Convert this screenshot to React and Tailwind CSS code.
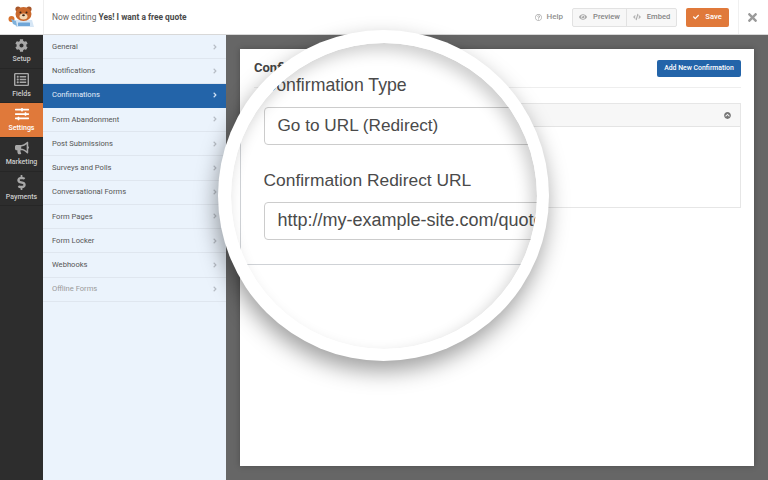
import {
  FaCog,
  FaRegListAlt,
  FaSlidersH,
  FaBullhorn,
  FaDollarSign,
  FaAngleRight,
  FaTimes,
  FaCheck,
  FaEye,
  FaCode,
  FaRegQuestionCircle,
  FaChevronCircleUp,
} from "react-icons/fa";

const panels = [
  { label: "General" },
  { label: "Notifications" },
  { label: "Confirmations", active: true },
  { label: "Form Abandonment" },
  { label: "Post Submissions" },
  { label: "Surveys and Polls" },
  { label: "Conversational Forms" },
  { label: "Form Pages" },
  { label: "Form Locker" },
  { label: "Webhooks" },
  { label: "Offline Forms", muted: true },
];

const tabs = [
  { label: "Setup", icon: <FaCog className="text-[13px]" /> },
  { label: "Fields", icon: <FaRegListAlt className="text-[15px]" /> },
  { label: "Settings", icon: <FaSlidersH className="text-[14px]" />, active: true },
  { label: "Marketing", icon: <FaBullhorn className="text-[14px]" /> },
  { label: "Payments", icon: <FaDollarSign className="text-[15px]" /> },
];

const BearLogo = () => (
  <svg width="28" height="22" viewBox="0 0 28 22">
    <circle cx="3.5" cy="13" r="3" fill="#d9722c" />
    <circle cx="10" cy="3" r="2.6" fill="#a6562a" />
    <circle cx="21" cy="3" r="2.6" fill="#a6562a" />
    <path d="M7 14 h17 l2 7 h-18 z" fill="#d6e6f5" />
    <ellipse cx="15.5" cy="8" rx="8" ry="7" fill="#c9682c" />
    <ellipse cx="15.5" cy="10.5" rx="4" ry="3" fill="#f3d6b4" />
    <circle cx="12.5" cy="6.5" r="1" fill="#3a2418" />
    <circle cx="18.5" cy="6.5" r="1" fill="#3a2418" />
    <ellipse cx="15.5" cy="9.3" rx="1.4" ry="1" fill="#3a2418" />
    <rect x="10" y="16.5" width="12" height="3.5" rx="0.5" fill="#6ea6d8" />
    <path d="M3 13 l5 2 l1 5 l-4 -2 z" fill="#7fb2dc" />
  </svg>
);

export default function App() {
  return (
    <div className="relative w-[768px] h-[480px] overflow-hidden bg-white font-['Roboto','Liberation_Sans',sans-serif]">
      {/* top bar */}
      <div className="flex h-[35px] items-center border-b border-[#d8d8d8] bg-white">
        <div className="flex h-full w-[44px] items-center justify-center border-r border-[#eeeeee]">
          <BearLogo />
        </div>
        <p className="ml-[8px] text-[8.4px] text-[#666666]">
          Now editing <span className="font-bold text-[#4a4a4a]">Yes! I want a free quote</span>
        </p>
        <div className="ml-auto flex h-full items-center">
          <div className="flex items-center gap-[5px] text-[8px] font-medium text-[#8f8f8f]">
            <FaRegQuestionCircle className="text-[7px] text-[#aaaaaa]" />
            Help
          </div>
          <div className="ml-[9px] flex h-[19px] w-[105px] rounded-[2px] border border-[#e2e2e2] bg-[#f7f7f7] text-[7.6px] font-medium text-[#858585]">
            <div className="flex w-[54px] items-center justify-center gap-[6px] border-r border-[#e2e2e2]">
              <FaEye className="text-[8px] text-[#aaaaaa]" />
              Preview
            </div>
            <div className="flex flex-1 items-center justify-center gap-[6px]">
              <FaCode className="text-[8px] text-[#aaaaaa]" />
              Embed
            </div>
          </div>
          <div className="ml-[9px] flex h-[19px] w-[43px] items-center justify-center gap-[6px] rounded-[2px] bg-[#e0793a] text-[7.6px] font-medium text-white">
            <FaCheck className="text-[6px]" />
            Save
          </div>
          <div className="ml-[9px] flex h-full w-[30px] items-center justify-center border-l border-[#f0f0f0] pr-[2px]">
            <FaTimes className="text-[13px] text-[#9a9a9a]" />
          </div>
        </div>
      </div>

      <div className="flex h-[445px]">
        {/* main tabs */}
        <div className="w-[43px] shrink-0 bg-[#2d2d2d]">
          {tabs.map((t) => (
            <div
              key={t.label}
              className={`flex h-[34.2px] flex-col items-center justify-center gap-[2px] border-b border-[#262626] text-[7px] font-medium ${
                t.active ? "bg-[#e0793a] text-white" : "text-[#cccccc]"
              }`}
            >
              <span className={t.active ? "text-white" : "text-[#a8a8a8]"}>{t.icon}</span>
              {t.label}
            </div>
          ))}
        </div>

        {/* panel list */}
        <div className="w-[183px] shrink-0 bg-[#ebf3fc]">
          {panels.map((p) => (
            <div
              key={p.label}
              className={`flex h-[24.25px] items-center justify-between border-b pl-[9px] pr-[7px] text-[7.6px] ${
                p.active
                  ? "border-[#2364a9] bg-[#2364a9] text-[#e4eefa]"
                  : p.muted
                    ? "border-[#dfe6ef] text-[#9a9a9a]"
                    : "border-[#dfe6ef] text-[#555555]"
              }`}
            >
              {p.label}
              <FaAngleRight className={`text-[8px] ${p.active ? "text-[#cfe0f3]" : "text-[#b8bec6]"}`} />
            </div>
          ))}
        </div>

        {/* content */}
        <div className="flex-1 bg-[#666666] p-[14px]">
          <div className="h-[417px] bg-white pl-[14px] pr-[13px] shadow-[0_0_6px_rgba(0,0,0,0.25)]">
            <div className="flex h-[39px] items-center justify-between border-b border-[#eeeeee]">
              <span className="text-[13px] font-bold text-[#444444]">Confirmations</span>
              <span className="flex h-[17px] w-[84px] items-center justify-center rounded-[2px] bg-[#2364a9] text-[6.9px] font-medium text-white">
                Add New Confirmation
              </span>
            </div>
            <div className="mt-[15px] h-[105px] border border-[#e6e6e6]">
              <div className="flex h-[23px] items-center justify-end border-b border-[#e4e4e4] bg-[#f7f7f7] pr-[9px]">
                <FaChevronCircleUp className="text-[7px] text-[#777777]" />
              </div>
            </div>
          </div>
        </div>
      </div>

      {/* magnifier over the page */}
      <div className="absolute left-[218px] top-[30px] flex h-[331px] w-[331px] items-center justify-center rounded-full bg-white shadow-[-2px_10px_22px_rgba(0,0,0,0.38)]">
        <div className="relative h-[306px] w-[306px] overflow-hidden rounded-full bg-white">
          <div className="ml-[9px] h-[222px] w-[420px] border-b border-l border-[#cfd2d6] pl-[23px] pt-[32px] font-['Liberation_Sans',sans-serif] text-[#4a4a4a]">
            <p className="text-[17.7px] leading-[20px]">Confirmation Type</p>
            <div className="mt-[12px] flex h-[38px] items-center rounded-[4px] border border-[#cccccc] pl-[13px] text-[17.2px]">
              Go to URL (Redirect)
            </div>
            <p className="mt-[25px] text-[17.4px] leading-[20px]">Confirmation Redirect URL</p>
            <div className="mt-[12px] flex h-[38px] items-center rounded-[4px] border border-[#cccccc] pl-[13px] text-[18px]">
              http://my-example-site.com/quote/
            </div>
          </div>
          <div className="pointer-events-none absolute inset-0 rounded-full shadow-[inset_-5px_7px_16px_rgba(0,0,0,0.2)]" />
        </div>
      </div>
    </div>
  );
}
